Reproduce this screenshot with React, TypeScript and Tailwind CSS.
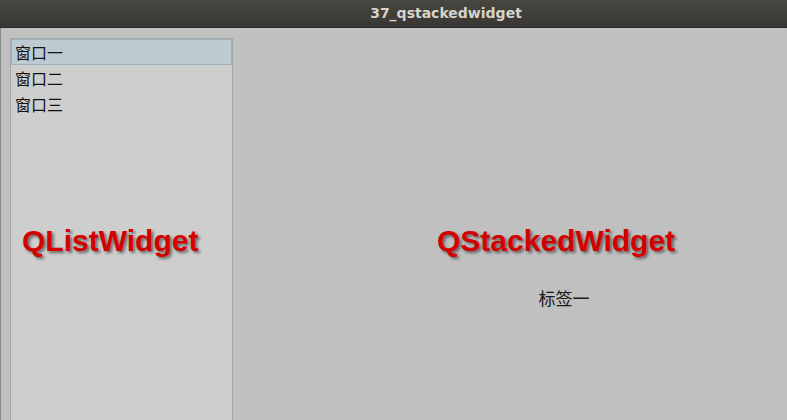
const items = ["窗口一", "窗口二", "窗口三"];

const cjk = "font-['Noto_Sans_CJK_SC',sans-serif]";
const note =
  "font-['Liberation_Sans',Arial,sans-serif] font-bold text-[#d40000] text-[30px] leading-none [text-shadow:2px_2px_3px_rgba(0,0,0,0.5)]";

export default function App() {
  return (
    <div className="w-[787px] h-[420px] overflow-hidden flex flex-col bg-[#c0c0c0]">
      {/* title bar */}
      <div className="h-[28px] shrink-0 flex items-center justify-center bg-gradient-to-b from-[#47463f] to-[#383733] border-b border-[#2a2926]">
        <span className="font-['DejaVu_Sans',sans-serif] font-bold text-[14px] text-[#d8d4cb] ml-[105px]">
          37_qstackedwidget
        </span>
      </div>

      <div className="relative flex-1 flex border-l border-[#8c8c8c] pl-[9px] pt-[10px]">
        {/* list widget */}
        <div className="w-[223px] h-[400px] bg-[#cecece] border border-[#a6a6a6] flex flex-col">
          {items.map((t, i) => (
            <div
              key={t}
              className={
                "h-[26px] flex items-center pl-[3px] text-[16px] text-[#111] " +
                cjk +
                (i === 0 ? " bg-[#bccad2] border border-[#9db0bc]" : " border border-transparent")
              }
            >
              {t}
            </div>
          ))}
        </div>

        {/* stacked widget page */}
        <div className="flex-1 flex flex-col items-center pt-[247px] pl-[108px]">
          <span className={"text-[17px] text-[#1a1a1a] " + cjk}>标签一</span>
        </div>

        {/* annotations */}
        <span className={"absolute left-[21px] top-[198px] " + note}>QListWidget</span>
        <span className={"absolute left-[436px] top-[198px] " + note}>QStackedWidget</span>
      </div>
    </div>
  );
}
